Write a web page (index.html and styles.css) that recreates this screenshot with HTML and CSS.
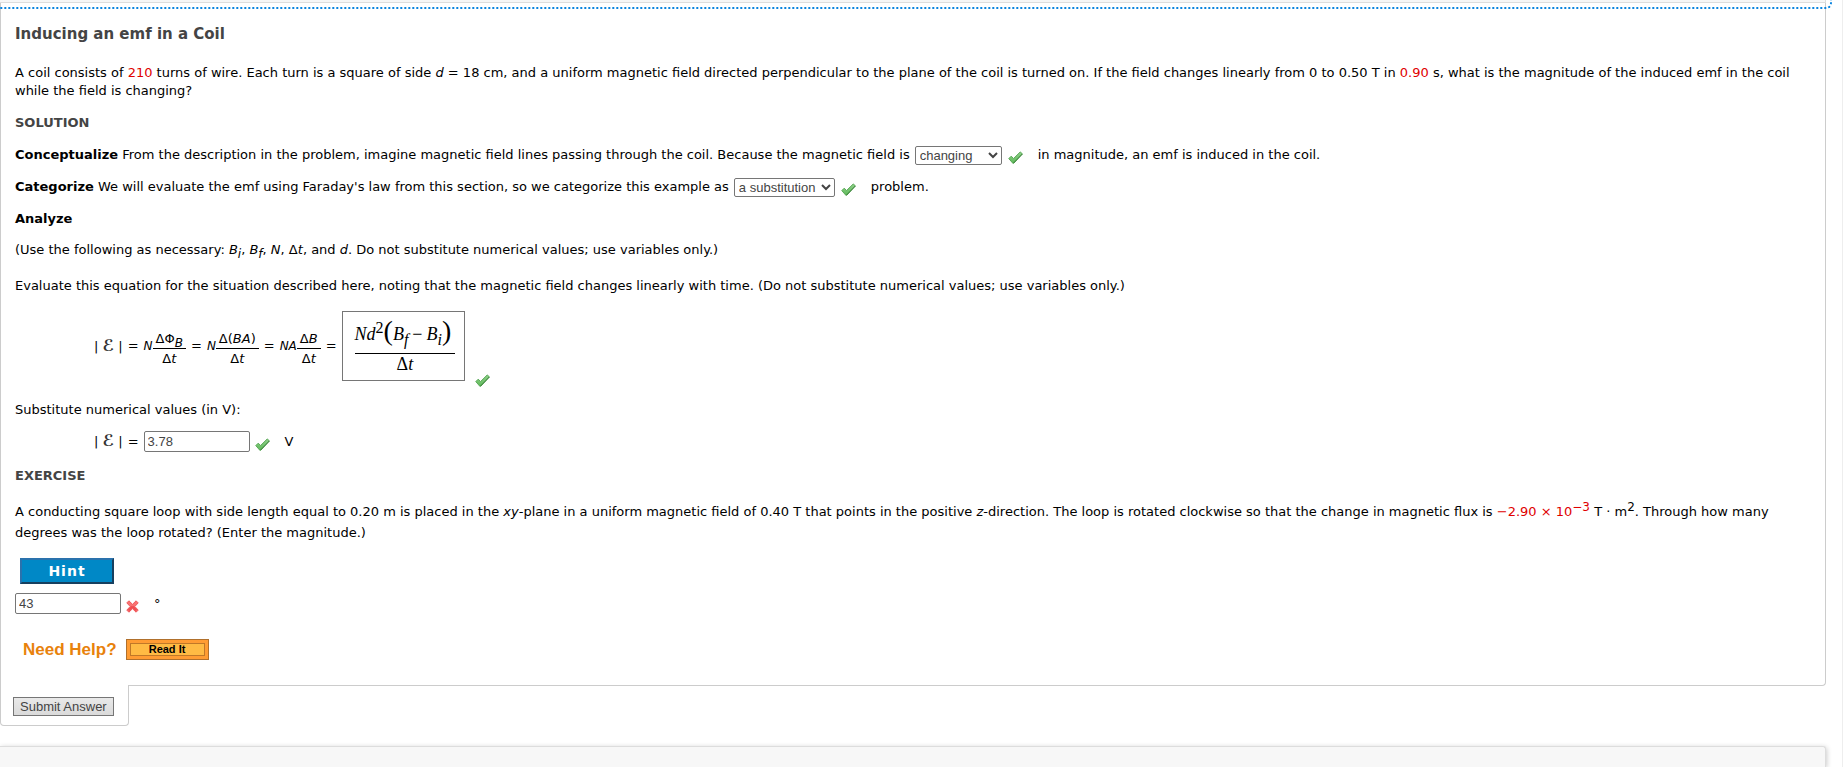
FILE: index.html
```html
<!DOCTYPE html>
<html lang="en">
<head>
<meta charset="utf-8">
<title>Inducing an emf in a Coil</title>
<link rel="stylesheet" href="styles.css">
</head>
<body>
<svg width="0" height="0" class="defs" aria-hidden="true">
  <defs>
    <linearGradient id="green" x1="0" y1="0" x2="0" y2="1"><stop offset="0" stop-color="#8fd08a"/><stop offset="1" stop-color="#5fba5a"/></linearGradient>
    <symbol id="check" viewBox="0 0 15 13"><path d="M.8 7.6 3.2 5.2 5.6 7.5 12.2 1 14.4 2.8 5.8 12.2 4.8 12.2Z" fill="url(#green)" stroke="#5aa857" stroke-width="1" stroke-linejoin="round"/><path d="M5.4 12.2 14.4 3" stroke="#3d7f3c" stroke-width="1" fill="none"/></symbol>
    <symbol id="cross" viewBox="0 0 13 13"><path d="M.8 2.9 2.9.8 6.5 4.3 10.1.8 12.2 2.9 8.8 6.5 12.2 10.1 10.1 12.2 6.5 8.7 2.9 12.2.8 10.1 4.2 6.5Z" fill="#f97272" stroke="#ee5a5c" stroke-width="1" stroke-linejoin="round"/><path d="M6.5 6.5 10.4 10.4M6.5 6.5 2.6 10.4" stroke="#f04c50" stroke-width="2"/></symbol>
  </defs>
</svg>
<div class="page">
  <div class="previous"></div>
  <div class="focus-ring"></div>
  <main class="question">
    <h1>Inducing an emf in a Coil</h1>
    <p>A coil consists of <span class="value">210</span> turns of wire. Each turn is a square of side <i>d</i> = 18 cm, and a uniform magnetic field directed perpendicular to the plane of the coil is turned on. If the field changes linearly from 0 to 0.50 T in <span class="value">0.90</span> s, what is the magnitude of the induced emf in the coil while the field is changing?</p>
    <h2>SOLUTION</h2>
    <p class="row"><label for="s1"><b>Conceptualize</b> From the description in the problem, imagine magnetic field lines passing through the coil. Because the magnetic field is</label>
      <select id="s1" class="short"><option>changing</option></select>
      <svg class="mark"><use href="#check"/></svg><span class="after">in magnitude, an emf is induced in the coil.</span></p>
    <p class="row"><label for="s2"><b>Categorize</b> We will evaluate the emf using Faraday's law from this section, so we categorize this example as</label>
      <select id="s2" class="long"><option>a substitution</option></select>
      <svg class="mark"><use href="#check"/></svg><span class="after">problem.</span></p>
    <h2 class="dark">Analyze</h2>
    <p>(Use the following as necessary: <i>B<sub>i</sub></i>, <i>B<sub>f</sub></i>, <i>N</i>, Δ<i>t</i>, and <i>d</i>. Do not substitute numerical values; use variables only.)</p>
    <p class="evaluate">Evaluate this equation for the situation described here, noting that the magnetic field changes linearly with time. (Do not substitute numerical values; use variables only.)</p>
    <div class="equation">
      <span class="emf">| <span class="script">ℰ</span> |</span>
      <span>=</span>
      <span class="term"><i>N</i><span class="frac"><span>ΔΦ<sub><i>B</i></sub></span><span>Δ<i>t</i></span></span></span>
      <span>=</span>
      <span class="term"><i>N</i><span class="frac"><span>Δ(<i>BA</i>)</span><span>Δ<i>t</i></span></span></span>
      <span>=</span>
      <span class="term"><i>NA</i><span class="frac"><span>Δ<i>B</i></span><span>Δ<i>t</i></span></span></span>
      <span>=</span>
      <span class="answer"><span class="frac"><span class="top"><i>Nd</i><sup>2</sup><span class="paren">(</span><i>B<sub>f</sub></i><span class="minus">−</span><i>B<sub>i</sub></i><span class="paren">)</span></span><span>Δ<i>t</i></span></span></span>
      <svg class="mark low"><use href="#check"/></svg>
    </div>
    <p class="substitute">Substitute numerical values (in V):</p>
    <div class="equation numeric">
      <label for="emf" class="emf">| <span class="script">ℰ</span> |</label>
      <span>=</span>
      <input id="emf" type="text" value="3.78">
      <svg class="mark"><use href="#check"/></svg><span class="unit">V</span>
    </div>
    <h2>EXERCISE</h2>
    <p class="exercise">A conducting square loop with side length equal to 0.20 m is placed in the <i>xy</i>-plane in a uniform magnetic field of 0.40 T that points in the positive <i>z</i>-direction. The loop is rotated clockwise so that the change in magnetic flux is <span class="value">−2.90 × 10<sup>−3</sup></span> T · m<sup>2</sup>. Through how many degrees was the loop rotated? (Enter the magnitude.)</p>
    <button type="button" class="hint">Hint</button>
    <div class="row degrees">
      <input id="deg" type="text" value="43" aria-label="Angle in degrees">
      <svg class="mark cross"><use href="#cross"/></svg><label for="deg" class="unit">°</label>
    </div>
    <div class="help"><span class="need">Need Help?</span><button type="button" class="read">Read It</button></div>
  </main>
  <div class="submit-tab"><button type="button" class="submit">Submit Answer</button></div>
  <div class="next"></div>
</div>
</body>
</html>
```
FILE: styles.css
```css
* { box-sizing: border-box; }
html { height: 100%; }
body {
  margin: 0;
  min-height: 100%;
  display: flex;
  border-right: 1px solid #eee;
  background: #fff;
  color: #000;
  font: 13px/18px Verdana, "DejaVu Sans", sans-serif;
}
.defs { position: absolute; }
.page {
  position: relative;
  flex: 1;
  min-width: 0;
  display: flex;
  flex-direction: column;
  padding-right: 16px;
  overflow: hidden;
}
.previous {
  height: 3px;
  background: #f7f7f7;
  border-bottom: 1px solid #ddd;
  border-right: 1px solid #ddd;
}
.focus-ring {
  position: absolute;
  top: -20px;
  left: -20px;
  right: 10px;
  height: 29px;
  border: 2px dotted #0a84de;
  border-radius: 6px;
}
.question {
  border: 1px solid #ccc;
  border-top: 0;
  border-radius: 0 0 4px 0;
  padding: 21px 14px 25px;
}
h1, h2, p { margin: 0 0 14px; }
h1 { font-size: 15px; line-height: 20px; color: #444; margin-bottom: 20px; }
h2 { font-size: 13px; line-height: 18px; color: #444; }
h2.dark { color: #000; margin-bottom: 13px; }
.value { color: #e00000; }
sub, sup { font-size: 12px; line-height: 0; }
.row { display: flex; align-items: center; gap: 5px; height: 18px; }
.mark { width: 15px; height: 13px; flex: none; margin: 5px 0 0 1px; }
.after { margin-left: 10px; }
select, input {
  font: 13px "Liberation Sans", Arial, sans-serif;
  color: #444;
  background: #fff;
  border: 1px solid #767676;
  border-radius: 2px;
  margin: 0;
}
select { height: 19px; padding: 0; }
.short { width: 87px; }
.long { width: 101px; }
input { width: 106px; height: 21px; padding: 0 3px; }
.evaluate { margin: 18px 0 16px; }
.equation {
  display: flex;
  align-items: center;
  gap: 5px;
  padding-left: 79px;
  margin-bottom: 20px;
}
.emf { white-space: nowrap; }
.script { font: bold 16px/18px "DejaVu Sans", sans-serif; color: #333; }
.term { display: flex; align-items: center; }
.term > i { font-size: 12px; }
.frac { display: flex; flex-direction: column; text-align: center; margin-top: 6px; }
.frac > :first-child { padding: 0 3px; }
.frac > :last-child { border-top: 1px solid #000; padding-top: 1px; }
.answer {
  border: 1px solid #767676;
  padding: 6px 9px 6px 12px;
  font: 18px/20px "Liberation Serif", "Times New Roman", serif;
}
.answer .frac { margin: 0; }
.answer .top { height: 35px; line-height: 32px; padding: 0 4px 0 0; white-space: nowrap; }
.answer .frac > :last-child { padding: 0; }
.answer .minus { margin: 0 4px; }
.answer sub, .answer sup { font-size: 16px; }
.paren { font-size: 28px; line-height: 0; }
.low { align-self: flex-end; margin: 0 0 -6px 5px; }
.substitute { margin-bottom: 12px; }
.numeric { height: 21px; margin-bottom: 15px; }
.numeric .mark { margin-left: 0; }
.unit { margin-left: 10px; }
.exercise { line-height: 21px; margin: 16px 0 15px; }
.hint {
  display: block;
  width: 94px;
  height: 26px;
  margin: 0 0 9px 5px;
  padding: 0;
  color: #fff;
  background: #0088c6;
  border: 2px solid;
  border-color: #2a72ad #17405f #17405f #2a72ad;
  font: bold 14px/20px Verdana, "DejaVu Sans", sans-serif;
  letter-spacing: 1px;
}
.degrees { height: 21px; margin-bottom: 25px; }
.cross { width: 13px; height: 13px; margin-left: 0; }
.help { display: flex; align-items: center; gap: 9px; padding-left: 8px; }
.need { font: bold 17px/21px "Liberation Sans", Arial, sans-serif; color: #e8820c; }
.read {
  width: 83px;
  height: 21px;
  padding: 0;
  border: 1px solid #b0702c;
  background: #fb4;
  box-shadow: inset 0 0 0 3px #ff9c33, inset 0 0 0 4px #c07828;
  color: #000;
  font: bold 11px/17px "Liberation Sans", Arial, sans-serif;
}
.submit-tab {
  position: relative;
  align-self: flex-start;
  margin-top: -1px;
  padding: 12px 14px 9px 12px;
  background: #fff;
  border: 1px solid #ccc;
  border-top: 0;
  border-radius: 0 0 4px 4px;
}
.submit {
  display: block;
  height: 19px;
  padding: 0 6px;
  border: 1px solid #767676;
  background: linear-gradient(#e9e9e9, #dadada);
  color: #444;
  font: 13px/17px "Liberation Sans", Arial, sans-serif;
}
.next {
  flex: 1;
  margin-top: 20px;
  background: #f7f7f7;
  border: 1px solid #ddd;
  border-width: 1px 1px 0 0;
  border-radius: 0 3px 0 0;
  box-shadow: 1px 1px 5px #ccc;
}
```
